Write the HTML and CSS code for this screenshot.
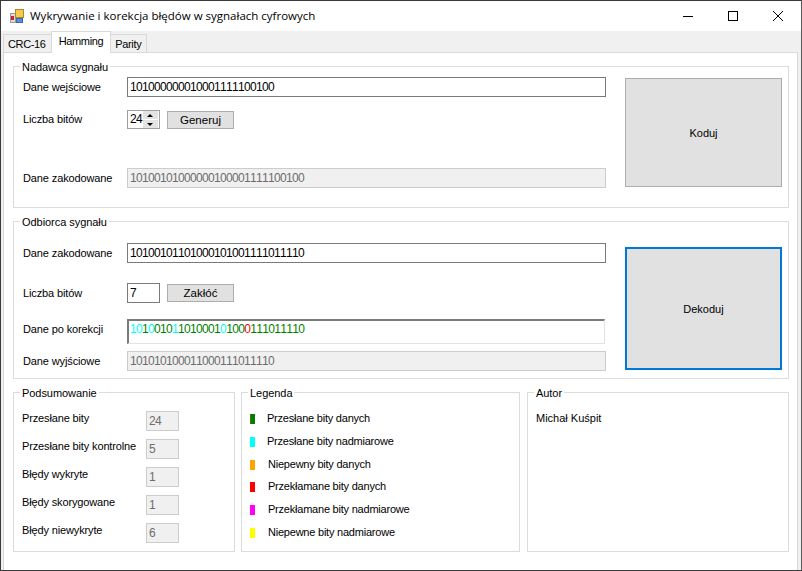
FILE: index.html
```html
<!DOCTYPE html>
<html lang="pl">
<head>
    <meta charset="UTF-8">
    <title>Wykrywanie i korekcja błędów w sygnałach cyfrowych</title>
    <link rel="stylesheet" href="styles.css">
</head>
<body>

<div class="window">
    <div class="titlebar">
        <svg class="app-icon" width="16" height="16" viewBox="0 0 16 16">
            <rect x="1.5" y="5.5" width="5" height="9" fill="#dcdcdc" stroke="#9a9a9a"/>
            <rect x="2" y="8" width="3" height="4" fill="#c0282a"/>
            <rect x="6.5" y="1.5" width="8" height="8" fill="#f6c94a" stroke="#a98a2c"/>
            <rect x="7.5" y="10.5" width="6" height="4" fill="#5d8fdc" stroke="#3a66ad"/>
        </svg>
        <span class="title">Wykrywanie i korekcja błędów w sygnałach cyfrowych</span>
        <div class="controls">
            <svg width="10" height="10" viewBox="0 0 10 10"><path d="M0 5.5H10" stroke="#000" fill="none"/></svg>
            <svg width="10" height="10" viewBox="0 0 10 10"><rect x="0.5" y="0.5" width="9" height="9" stroke="#000" fill="none"/></svg>
            <svg width="10" height="10" viewBox="0 0 10 10"><path d="M0 0L10 10M10 0L0 10" stroke="#000" fill="none"/></svg>
        </div>
    </div>

    <div class="tabs">
        <div class="tab">CRC-16</div>
        <div class="tab active">Hamming</div>
        <div class="tab">Parity</div>
    </div>

    <div class="tab-page">
        <div class="group group-send">
            <span class="group-title">Nadawca sygnału</span>
            <div class="fields">
                <div class="row row-input">
                    <label>Dane wejściowe</label>
                    <div class="textbox">101000000010001111100100</div>
                </div>
                <div class="row row-bits">
                    <label>Liczba bitów</label>
                    <div class="spinner">
                        <span>24</span>
                        <div class="arrows">
                            <i class="arrow-up"></i>
                            <i class="arrow-down"></i>
                        </div>
                    </div>
                    <button class="small-button">Generuj</button>
                </div>
                <div class="row row-encoded">
                    <label>Dane zakodowane</label>
                    <div class="textbox disabled">10100101000000100001111100100</div>
                </div>
            </div>
            <button class="big-button">Koduj</button>
        </div>

        <div class="group group-receive">
            <span class="group-title">Odbiorca sygnału</span>
            <div class="fields">
                <div class="row row-input">
                    <label>Dane zakodowane</label>
                    <div class="textbox">10100101101000101001111011110</div>
                </div>
                <div class="row row-noise">
                    <label>Liczba bitów</label>
                    <div class="textbox short">7</div>
                    <button class="small-button">Zakłóć</button>
                </div>
                <div class="row row-corrected">
                    <label>Dane po korekcji</label>
                    <div class="richbox"><span class="c">10</span><span class="g">1</span><span class="c">0</span><span class="g">010</span><span class="c">1</span><span class="g">1010001</span><span class="c">0</span><span class="g">100</span><span class="r">0</span><span class="g">111011110</span></div>
                </div>
                <div class="row row-output">
                    <label>Dane wyjściowe</label>
                    <div class="textbox disabled">101010100011000111011110</div>
                </div>
            </div>
            <button class="big-button focused">Dekoduj</button>
        </div>

        <div class="bottom-row">
            <div class="group group-summary">
                <span class="group-title">Podsumowanie</span>
                <div class="stat"><label>Przesłane bity</label><div class="stat-box">24</div></div>
                <div class="stat"><label>Przesłane bity kontrolne</label><div class="stat-box">5</div></div>
                <div class="stat"><label>Błędy wykryte</label><div class="stat-box">1</div></div>
                <div class="stat"><label>Błędy skorygowane</label><div class="stat-box">1</div></div>
                <div class="stat"><label>Błędy niewykryte</label><div class="stat-box">6</div></div>
            </div>

            <div class="group group-legend">
                <span class="group-title">Legenda</span>
                <div class="legend-item"><i class="swatch green"></i><span>Przesłane bity danych</span></div>
                <div class="legend-item"><i class="swatch cyan"></i><span>Przesłane bity nadmiarowe</span></div>
                <div class="legend-item wide"><i class="swatch orange"></i><span>Niepewny bity danych</span></div>
                <div class="legend-item wide"><i class="swatch red"></i><span>Przekłamane bity danych</span></div>
                <div class="legend-item wide"><i class="swatch magenta"></i><span>Przekłamane bity nadmiarowe</span></div>
                <div class="legend-item wide"><i class="swatch yellow"></i><span>Niepewne bity nadmiarowe</span></div>
            </div>

            <div class="group group-author">
                <span class="group-title">Autor</span>
                <p>Michał Kuśpit</p>
            </div>
        </div>
    </div>
</div>

</body>
</html>
```

FILE: styles.css
```css
* {
    box-sizing: border-box;
}

html, body {
    margin: 0;
    padding: 0;
    background: #ffffff;
}

body {
    font-family: "Liberation Sans", Arial, sans-serif;
    font-size: 11px;
    font-kerning: none;
    color: #000000;
}

.window {
    width: 802px;
    height: 571px;
    border-top: 1px solid #3a3a3a;
    border-left: 1px solid #3a3a3a;
    border-right: 1px solid #5a5a5a;
    border-bottom: 1px solid #3a3a3a;
    background-color: #f0f0f0;
    display: flex;
    flex-direction: column;
    overflow: hidden;
}

.titlebar {
    height: 30px;
    flex: none;
    background-color: #ffffff;
    display: flex;
    align-items: center;
}

.app-icon {
    margin-left: 8px;
    margin-top: -1px;
}

.title {
    margin-left: 5px;
    font-family: "Open Sans", sans-serif;
    font-size: 11.5px;
    margin-top: -1px;
}

.controls {
    margin-left: auto;
    display: flex;
    gap: 35px;
    padding-right: 18px;
    margin-top: -1px;
}

.controls svg {
    display: block;
}

.tabs {
    height: 21px;
    flex: none;
    display: flex;
    align-items: flex-end;
    padding-left: 2px;
}

.tab {
    height: 18px;
    padding: 0 5px 0 4px;
    line-height: 18px;
    letter-spacing: -0.35px;
    background-color: #f0f0f0;
    border: 1px solid #d9d9d9;
    border-bottom: none;
    margin-right: -1px;
}

.tab.active {
    height: 22px;
    margin-bottom: -1px;
    padding: 0 7px;
    line-height: 18px;
    background-color: #ffffff;
    position: relative;
    z-index: 1;
}

.tab-page {
    flex: 1;
    margin: 0 3px 0 2px;
    background-color: #ffffff;
    border: 1px solid #d9d9d9;
    border-bottom: none;
    padding: 13px 8px 0 9px;
}

.group {
    position: relative;
    border: 1px solid #dcdcdc;
}

.group-title {
    position: absolute;
    top: -7px;
    left: 6px;
    padding: 0 2px;
    background-color: #ffffff;
    line-height: 14px;
    letter-spacing: -0.05px;
}

.group-send {
    height: 142px;
    display: flex;
    margin-bottom: 13px;
}

.group-receive {
    height: 158px;
    display: flex;
    margin-bottom: 13px;
}

.fields {
    width: 611px;
    padding-left: 9px;
    flex: none;
}

.row {
    display: flex;
    align-items: center;
}

.row label {
    width: 104px;
    flex: none;
    letter-spacing: -0.12px;
}

.textbox {
    width: 479px;
    height: 20px;
    flex: none;
    border: 1px solid #7a7a7a;
    padding-left: 2px;
    line-height: 18px;
    font-size: 12px;
    letter-spacing: -0.67px;
    background-color: #ffffff;
}

.textbox.short {
    width: 33px;
}

.textbox.disabled {
    border-color: #cccccc;
    background-color: #f0f0f0;
    color: #6d6d6d;
}

.group-send .row-input {
    margin-top: 10px;
}

.row-bits {
    margin-top: 13px;
}

.row-bits label {
    margin-top: -1px;
}

.row-encoded {
    margin-top: 39px;
}

.group-receive .row-input {
    margin-top: 21px;
}

.row-noise {
    margin-top: 20px;
}

.row-corrected {
    margin-top: 16px;
    align-items: flex-start;
}

.row-corrected label {
    line-height: 20px;
}

.row-output {
    margin-top: 7px;
}

.spinner {
    width: 33px;
    height: 19px;
    border: 1px solid #a0a0a0;
    display: flex;
    justify-content: space-between;
    padding: 0 1px 0 2px;
    line-height: 17px;
    font-size: 12px;
    letter-spacing: -0.67px;
}

.arrows {
    width: 15px;
    display: flex;
    flex-direction: column;
}

.arrow-up, .arrow-down {
    flex: 1;
    background-color: #e3e3e3;
    position: relative;
}

.arrow-up {
    border-bottom: 1px solid #ffffff;
}

.arrow-up::after, .arrow-down::after {
    content: "";
    position: absolute;
    left: 4px;
    top: 3px;
    border-left: 3px solid transparent;
    border-right: 3px solid transparent;
}

.arrow-up::after {
    border-bottom: 3px solid #000000;
}

.arrow-down::after {
    border-top: 3px solid #000000;
}

.small-button {
    width: 67px;
    height: 18px;
    margin-left: 7px;
    padding: 0;
    background-color: #e1e1e1;
    border: 1px solid #adadad;
    font-family: inherit;
    font-size: 11.5px;
    color: #000000;
}

.big-button {
    width: 157px;
    flex: none;
    margin-left: 0;
    padding: 0;
    background-color: #e1e1e1;
    border: 1px solid #adadad;
    font-family: inherit;
    font-size: 11px;
    color: #000000;
}

.group-send .big-button {
    height: 109px;
    margin-top: 11px;
}

.group-receive .big-button {
    height: 123px;
    margin-top: 25px;
}

.big-button.focused {
    border: 2px solid #0078d7;
}

.richbox {
    width: 478px;
    height: 25px;
    border: 1px solid #e3e3e3;
    border-top: 2px solid #7a7a7a;
    border-left: 2px solid #7a7a7a;
    padding-left: 1px;
    font-size: 12px;
    line-height: 16px;
    letter-spacing: -0.67px;
}

.c { color: #00ffff; }
.g { color: #008000; }
.r { color: #ff0000; }

.bottom-row {
    display: flex;
    height: 165px;
    gap: 6px;
}

.group-summary {
    width: 222px;
    height: 160px;
    padding: 18px 0 0 8px;
}

.group-legend {
    width: 279px;
    height: 160px;
    margin-right: 1px;
    padding: 18px 0 0 8px;
}

.group-author {
    width: 262px;
    height: 160px;
    padding: 19px 0 0 8px;
}

.group-author p {
    margin: 0;
}

.stat {
    height: 20px;
    margin-bottom: 8px;
    display: flex;
}

.stat label {
    width: 124px;
    flex: none;
    line-height: 14px;
    letter-spacing: -0.14px;
}

.stat-box {
    width: 33px;
    height: 20px;
    border: 1px solid #cccccc;
    background-color: #f0f0f0;
    color: #6d6d6d;
    padding-left: 2px;
    line-height: 18px;
    font-size: 12px;
    letter-spacing: -0.67px;
}

.legend-item {
    height: 14px;
    margin-bottom: 8.8px;
    display: flex;
    align-items: center;
    line-height: 14px;
    letter-spacing: -0.22px;
}

.legend-item.wide .swatch {
    margin-right: 13px;
}

.swatch {
    width: 5px;
    height: 10px;
    margin-right: 12px;
    margin-top: 2px;
    flex: none;
}

.green {
    background-color: #008000;
    border-left: 1px solid #5a6a00;
}

.cyan { background-color: #00ffff; }
.orange { background-color: #ffa500; }
.red { background-color: #ff0000; }
.magenta { background-color: #ff00ff; }
.yellow { background-color: #ffff00; }
```
